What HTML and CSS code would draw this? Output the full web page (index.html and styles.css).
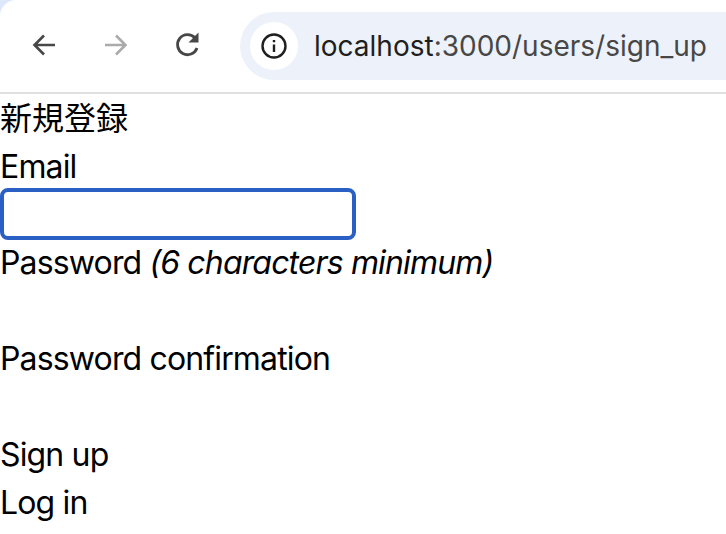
FILE: index.html
```html
<!DOCTYPE html>
<html lang="ja">
<head>
    <meta charset="UTF-8">
    <title>localhost:3000/users/sign_up</title>
    <link rel="stylesheet" href="styles.css">
</head>
<body>
    <div class="chrome">
        <header class="toolbar">
            <div class="nav-buttons">
                <svg class="nav-icon" viewBox="0 0 28 28" width="28" height="28"><path d="M25 14H5M14 4.500 4.500 14 14 23.500" fill="none" stroke="#474747" stroke-width="2.600"/></svg>
                <svg class="nav-icon" viewBox="0 0 28 28" width="28" height="28"><path d="M3 14H23M14 4.500 23.500 14 14 23.500" fill="none" stroke="#ababab" stroke-width="2.600"/></svg>
                <svg class="nav-icon" viewBox="0 0 28 28" width="28" height="28"><path d="M23 17A10 10 0 1 1 21 7" fill="none" stroke="#474747" stroke-width="2.800"/><path d="M24.500 1.500V11.500H14.500Z" fill="#474747"/></svg>
            </div>
            <div class="address-bar">
                <span class="site-info">
                    <svg viewBox="0 0 28 28" width="28" height="28"><circle cx="14" cy="14" r="11.500" fill="none" stroke="#1f1f1f" stroke-width="2.400"/><path d="M14 12.500V20M14 8V10.300" fill="none" stroke="#1f1f1f" stroke-width="2.400"/></svg>
                </span>
                <span class="url"><span class="host">localhost</span>:3000/users/sign_up</span>
            </div>
        </header>
    </div>
    <main class="content">
        <h2 class="title">新規登録</h2>
        <form class="signup-form">
            <div class="field field-email">
                <label for="email">Email</label>
                <input type="email" id="email" class="email-input">
            </div>
            <div class="field field-gap">
                <label>Password <em>(6 characters minimum)</em></label>
            </div>
            <div class="field field-gap">
                <label>Password confirmation</label>
            </div>
            <div class="field">Sign up</div>
            <div class="field">Log in</div>
        </form>
    </main>
</body>
</html>
```

FILE: styles.css
```css
* {
    box-sizing: border-box;
}
body {
    margin: 0;
    background-color: #fff;
    color: #000;
    font-family: "Inter", "Noto Sans CJK JP", sans-serif;
    font-size: 32px;
    line-height: 48px;
    letter-spacing: -0.85px;
    overflow: hidden;
}
.chrome {
    background-color: #dde8fb;
}
.toolbar {
    display: flex;
    align-items: center;
    height: 94px;
    padding-left: 30px;
    background-color: #fff;
    border-bottom: 2px solid #e0e0e0;
    border-top-left-radius: 16px;
}
.nav-buttons {
    display: flex;
    gap: 44px;
    margin-bottom: 2px;
}
.nav-icon {
    display: block;
}
.address-bar {
    display: flex;
    align-items: center;
    flex: 1;
    height: 68px;
    margin-left: 38px;
    padding-left: 10px;
    background-color: #edf2fa;
    border-radius: 34px 0 0 34px;
}
.site-info {
    display: flex;
    align-items: center;
    justify-content: center;
    width: 48px;
    height: 48px;
    background-color: #fff;
    border-radius: 50%;
}
.url {
    margin-left: 16px;
    color: #474747;
    font-family: "Inter", sans-serif;
    font-size: 28px;
    letter-spacing: 0;
    white-space: nowrap;
}
.host {
    color: #1f1f1f;
}
.content {
    padding-top: 1px;
}
.title {
    margin: 0;
    font-size: 32px;
    font-weight: normal;
    line-height: 48px;
    letter-spacing: 0;
}
.field {
    height: 48px;
}
.field-email,
.field-gap {
    height: 96px;
}
.field label {
    display: block;
}
.email-input {
    display: block;
    width: 356px;
    height: 52px;
    margin: -3px 0 -1px;
    background: #fff;
    border: 4px solid #2a5fc4;
    border-radius: 8px;
    outline: none;
}
```
